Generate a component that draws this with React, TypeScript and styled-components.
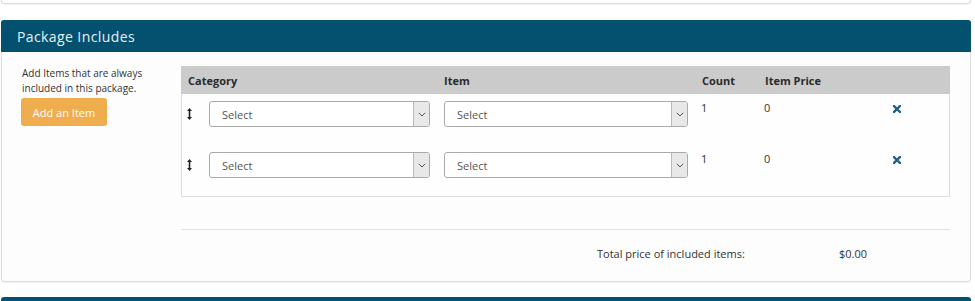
import React from 'react';
import styled, { createGlobalStyle } from 'styled-components';

const GlobalStyle = createGlobalStyle`
  body {
    margin: 0;
    background: #ffffff;
    font-family: "Open Sans", Lato, Arial, sans-serif;
    color: #333;
  }
`;

interface IRow {
  id: number;
  count: number;
  price: number;
}

const rows: IRow[] = [
  { id: 1, count: 1, price: 0 },
  { id: 2, count: 1, price: 0 },
];

const DragHandle = () => (
  <svg width="5" height="12" viewBox="0 0 5 12">
    <path d="M2.5 0 L5 3 L3.3 3 L3.3 9 L5 9 L2.5 12 L0 9 L1.7 9 L1.7 3 L0 3 Z" fill="#222" />
  </svg>
);

const RemoveIcon = () => (
  <svg width="8" height="8" viewBox="0 0 8 8">
    <path d="M1 1 L7 7 M7 1 L1 7" stroke="#1f5f8b" strokeWidth="2.4" strokeLinecap="square" />
  </svg>
);

const Chevron = () => (
  <svg width="8" height="5" viewBox="0 0 8 5">
    <path d="M0.8 0.8 L4 4 L7.2 0.8" stroke="#555" strokeWidth="1" fill="none" />
  </svg>
);

const SelectBox = () => (
  <Select>
    <SelectText>Select</SelectText>
    <SelectArrow>
      <Chevron />
    </SelectArrow>
  </Select>
);

const App = () => {
  return (
    <Page>
      <GlobalStyle />
      <TopCard />
      <Card>
        <CardHeader>Package Includes</CardHeader>
        <CardBody>
          <Aside>
            <Hint>Add Items that are always included in this package.</Hint>
            <AddButton>Add an Item</AddButton>
          </Aside>
          <Main>
            <Table>
              <HeadRow>
                <HeadCell style={{ gridColumn: 'span 2' }}>Category</HeadCell>
                <HeadCell>Item</HeadCell>
                <HeadCell>Count</HeadCell>
                <HeadCell>Item Price</HeadCell>
                <HeadCell />
              </HeadRow>
              {rows.map(row => (
                <BodyRow key={row.id}>
                  <HandleCell>
                    <DragHandle />
                  </HandleCell>
                  <Cell>
                    <SelectBox />
                  </Cell>
                  <Cell>
                    <SelectBox />
                  </Cell>
                  <TextCell>{row.count}</TextCell>
                  <TextCell>{row.price}</TextCell>
                  <RemoveCell>
                    <RemoveIcon />
                  </RemoveCell>
                </BodyRow>
              ))}
            </Table>
            <TotalRow>
              <TotalLabel>Total price of included items:</TotalLabel>
              <TotalValue>$0.00</TotalValue>
            </TotalRow>
          </Main>
        </CardBody>
      </Card>
      <NextHeader />
    </Page>
  );
};

const columns = '21px 235px 258px 63px 128px 1fr';

const Page = styled.div`
  width: 975px;
  height: 301px;
  overflow: hidden;
  padding: 0 4px 0 1px;
  box-sizing: border-box;
  display: flex;
  flex-direction: column;

  & > * {
    flex-shrink: 0;
  }
`;

const TopCard = styled.div`
  height: 19px;
  margin-top: -16px;
  border: 1px solid #dcdcdc;
  border-top: none;
  border-radius: 0 0 3px 3px;
  box-shadow: 0 1px 1px rgba(0, 0, 0, 0.05);
`;

const Card = styled.section`
  margin-top: 16px;
  border: 1px solid #dcdcdc;
  border-radius: 3px;
  background: #fdfdfd;
  box-shadow: 0 1px 1px rgba(0, 0, 0, 0.05);
`;

const CardHeader = styled.h2`
  margin: -1px -1px 0;
  height: 32px;
  padding: 0 16px;
  display: flex;
  align-items: center;
  background: #03506f;
  border-radius: 3px 3px 0 0;
  color: #e9f0f3;
  font-size: 14px;
  font-weight: 400;
  letter-spacing: 0.4px;
`;

const CardBody = styled.div`
  display: flex;
  padding: 14px 20px 4px 20px;
`;

const Aside = styled.div`
  width: 159px;
  flex-shrink: 0;
`;

const Hint = styled.p`
  margin: 0 0 2px;
  width: 140px;
  font-size: 10px;
  line-height: 15px;
  color: #333;
`;

const AddButton = styled.button`
  width: 86px;
  height: 28px;
  margin-left: -1px;
  border: none;
  border-radius: 3px;
  background: #f0ad4e;
  color: #fff;
  font-family: inherit;
  font-size: 11px;
  padding: 0;
`;

const Main = styled.div`
  flex: 1;
`;

const Table = styled.div`
  border: 1px solid #dddddd;
  border-top: none;
  background: #fefefe;
`;

const HeadRow = styled.div`
  display: grid;
  grid-template-columns: ${columns};
  height: 28px;
  margin: 0 -1px;
  background: #cbcbcb;
  align-items: center;
`;

const HeadCell = styled.div`
  padding-left: 7px;
  font-size: 11px;
  font-weight: 700;
  color: #2a2a2a;
`;

const BodyRow = styled.div`
  display: grid;
  grid-template-columns: ${columns};
  height: 51px;
  align-items: start;
  margin-left: -1px;
`;

const Cell = styled.div`
  padding: 7px 7px 0;
`;

const HandleCell = styled.div`
  display: flex;
  padding: 14px 0 0 6px;
`;

const TextCell = styled.div`
  padding: 6px 6px 0;
  font-size: 11px;
  color: #333;
`;

const RemoveCell = styled.div`
  display: flex;
  padding: 11px 0 0 7px;
`;

const Select = styled.div`
  display: flex;
  height: 26px;
  box-sizing: border-box;
  border: 1px solid #aaaaaa;
  border-radius: 3px;
  background: #fff;
  overflow: hidden;
`;

const SelectText = styled.span`
  flex: 1;
  display: flex;
  align-items: center;
  padding-left: 12px;
  font-size: 11px;
  color: #555;
`;

const SelectArrow = styled.span`
  width: 15px;
  display: flex;
  align-items: center;
  justify-content: center;
  border-left: 1px solid #bbb;
  background: #e8e8e8;
`;

const TotalRow = styled.div`
  margin-top: 32px;
  border-top: 1px solid #e2e2e2;
  height: 47px;
  display: flex;
  align-items: center;
  padding-left: 416px;
  font-size: 11px;
  color: #333;
`;

const TotalLabel = styled.span`
  width: 242px;
`;

const TotalValue = styled.span``;

const NextHeader = styled.div`
  margin-top: 15px;
  height: 20px;
  background: #03506f;
  border-radius: 3px 3px 0 0;
`;

export default App;
